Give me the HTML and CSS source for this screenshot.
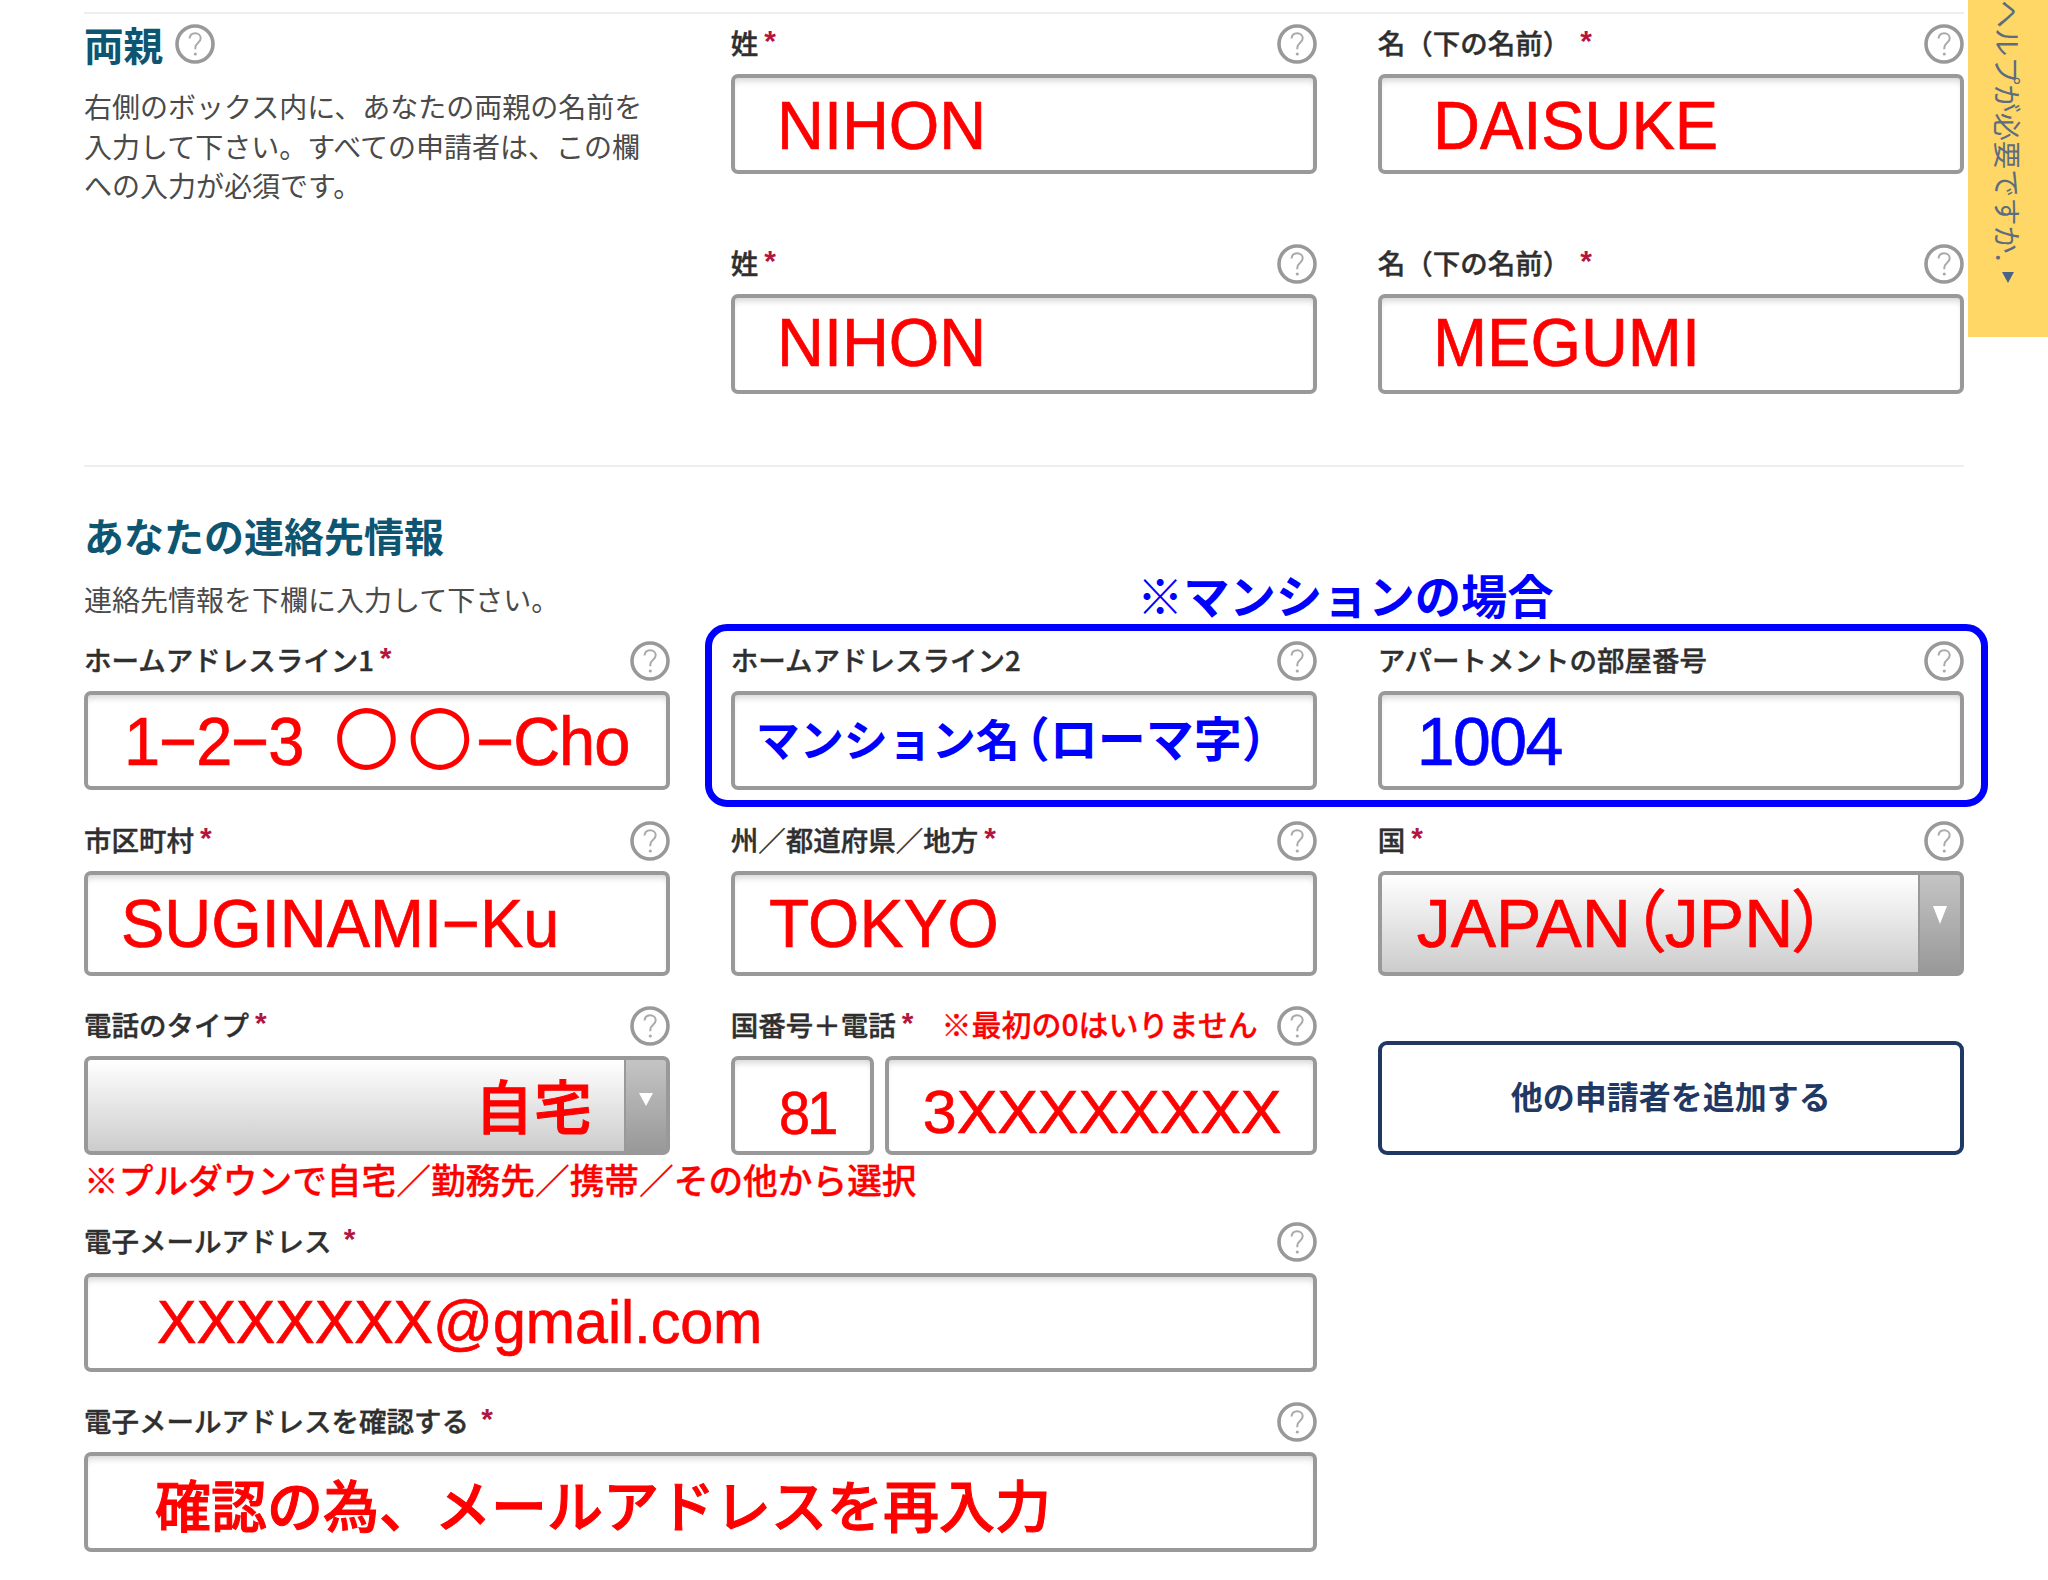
FILE: index.html
```html
<!DOCTYPE html>
<html lang="ja">
<head>
<meta charset="utf-8">
<title>両親 / 連絡先情報</title>
<link rel="stylesheet" href="styles.css">
</head>
<body>
<svg class="defs" width="0" height="0" aria-hidden="true">
  <symbol id="q" viewBox="0 0 40 40" preserveAspectRatio="none">
    <circle cx="20" cy="20" r="18" fill="#fff" stroke="#999" stroke-width="3.6"/>
    <path d="M14.5 14.5c.4-3.4 2.8-5.2 5.7-5.2 3.1 0 5.5 2 5.5 5 0 2.4-1.3 3.6-3 5-1.6 1.3-2.4 2.4-2.4 4.6v1.4" fill="none" stroke="#aaa" stroke-width="2"/>
    <circle cx="20.3" cy="30" r="1.6" fill="#aaa"/>
  </symbol>
</svg>
<main class="page">
  <hr class="rule rule-top">
  <section class="grid parents">
    <div class="intro">
      <h2 class="title"><span>両親</span><svg class="q"><use href="#q"/></svg></h2>
      <p class="desc">右側のボックス内に、あなたの両親の名前を<br>入力して下さい。すべての申請者は、この欄<br>への入力が必須です。</p>
    </div>
    <div class="field">
      <div class="label"><span>姓<i class="ast">*</i></span><svg class="q"><use href="#q"/></svg></div>
      <div class="box h100 val first pad-nihon"><span class="sq">NIHON</span></div>
    </div>
    <div class="field">
      <div class="label"><span>名（下の名前）<i class="ast ast-wide">*</i></span><svg class="q"><use href="#q"/></svg></div>
      <div class="box h100 val first pad-given"><span class="sq">DAISUKE</span></div>
    </div>
    <div class="field">
      <div class="label"><span>姓<i class="ast">*</i></span><svg class="q"><use href="#q"/></svg></div>
      <div class="box h100 val second pad-nihon"><span class="sq">NIHON</span></div>
    </div>
    <div class="field">
      <div class="label"><span>名（下の名前）<i class="ast ast-wide">*</i></span><svg class="q"><use href="#q"/></svg></div>
      <div class="box h100 val second pad-given"><span class="sq">MEGUMI</span></div>
    </div>
  </section>

  <hr class="rule rule-mid">
  <h2 class="title title-contact">あなたの連絡先情報</h2>
  <p class="desc desc-contact">連絡先情報を下欄に入力して下さい。</p>

  <section class="grid row-c">
    <div class="field">
      <div class="label"><span>ホームアドレスライン1<i class="ast">*</i></span><svg class="q"><use href="#q"/></svg></div>
      <div class="box h99 val pad-addr addr"><span class="sq">1−2−3&nbsp;<span class="maru">〇〇</span>−Cho</span></div>
    </div>
    <div class="field">
      <div class="label"><span>ホームアドレスライン2</span><svg class="q"><use href="#q"/></svg></div>
      <div class="box h99 val-blue pad-mansion"><span>マンション名<span class="kana">（ローマ字）</span></span></div>
    </div>
    <div class="field">
      <div class="label"><span>アパートメントの部屋番号</span><svg class="q"><use href="#q"/></svg></div>
      <div class="box h99 val blue pad-room">1004</div>
    </div>
  </section>

  <section class="grid row-d">
    <div class="field">
      <div class="label"><span>市区町村<i class="ast">*</i></span><svg class="q"><use href="#q"/></svg></div>
      <div class="box h105 val lift pad-city"><span class="sq">SUGINAMI−Ku</span></div>
    </div>
    <div class="field">
      <div class="label"><span>州／都道府県／地方<i class="ast">*</i></span><svg class="q"><use href="#q"/></svg></div>
      <div class="box h105 val lift pad-pref"><span class="sq-pref">TOKYO</span></div>
    </div>
    <div class="field">
      <div class="label"><span>国<i class="ast">*</i></span><svg class="q"><use href="#q"/></svg></div>
      <div class="box h105 select">
        <div class="select-value val lift pad-country country">JAPAN（JPN）</div>
        <div class="select-arrow arrow-tall"><b class="tri tri-tall"></b></div>
      </div>
    </div>
  </section>

  <section class="grid row-e">
    <div class="field">
      <div class="label"><span>電話のタイプ<i class="ast">*</i></span><svg class="q"><use href="#q"/></svg></div>
      <div class="box h99 select">
        <div class="select-value val-cjk pad-phone-type">自宅</div>
        <div class="select-arrow"><b class="tri"></b></div>
      </div>
    </div>
    <div class="field">
      <div class="label">
        <span>国番号＋電話<i class="ast">*</i><em class="hint">※最初の0はいりません</em></span>
        <svg class="q"><use href="#q"/></svg>
      </div>
      <div class="phone">
        <div class="box h99 val code pad-code"><span class="sq-code">81</span></div>
        <div class="box h99 val number pad-number">3XXXXXXXX</div>
      </div>
    </div>
    <button class="add" type="button">他の申請者を追加する</button>
  </section>

  <p class="note">※プルダウンで自宅／勤務先／携帯／その他から選択</p>

  <section class="grid row-f">
    <div class="field span2">
      <div class="label gap-11"><span>電子メールアドレス <i class="ast">*</i></span><svg class="q"><use href="#q"/></svg></div>
      <div class="box h99 val pad-mail mail"><span class="sq-mail">XXXXXXX@gmail.com</span></div>
    </div>
  </section>

  <section class="grid row-g">
    <div class="field span2">
      <div class="label"><span>電子メールアドレスを確認する <i class="ast">*</i></span><svg class="q"><use href="#q"/></svg></div>
      <div class="box h100 val-cjk pad-confirm">確認の為、メールアドレスを再入力</div>
    </div>
  </section>
</main>

<div class="frame"></div>
<div class="frame-note">※マンションの場合</div>
<aside class="help"><span class="help-text">ヘルプが必要ですか.</span><b class="help-tri"></b></aside>
</body>
</html>
```
FILE: styles.css
```css
* { box-sizing: border-box; }
html, body { margin: 0; padding: 0; background: #fff; }
body {
  width: 2048px;
  height: 1580px;
  overflow: hidden;
  position: relative;
  font-family: "Noto Sans CJK JP", "Liberation Sans", sans-serif;
  color: #333;
}
.defs { position: absolute; }
.page { width: 1964px; padding-left: 84px; }
.rule { border: 0; height: 2px; background: #eee; margin: 0; }
.rule-top { margin-top: 12px; }
.rule-mid { margin-top: 71px; }

.grid {
  display: grid;
  grid-template-columns: repeat(3, 1fr);
  column-gap: 60.5px;
}
.parents { margin-top: 10px; row-gap: 70px; }
.intro { grid-row: span 2; }
.row-c { margin-top: 22px; }
.row-d { margin-top: 31px; }
.row-e { margin-top: 30px; }
.row-f { margin-top: 23px; }
.row-g { margin-top: 30px; }
.span2 { grid-column: span 2; }

.title {
  display: flex;
  align-items: center;
  gap: 12px;
  margin: 0;
  height: 40px;
  font-size: 39.5px;
  line-height: 40px;
  font-weight: 700;
  color: #0d5571;
}
.title-contact { margin-top: 48px; font-size: 40px; }
.desc {
  margin: 23px 0 0;
  font-size: 28px;
  line-height: 39.5px;
  font-weight: 400;
  color: #4a4a4a;
}
.desc-contact { height: 40px; line-height: 40px; margin-top: 24px; }

.label {
  display: flex;
  justify-content: space-between;
  align-items: center;
  height: 40px;
  margin-bottom: 10px;
  font-size: 27.5px;
  line-height: 38px;
  font-weight: 500;
  color: #2f2f2f;
  -webkit-text-stroke: .4px #2f2f2f;
}
.label > span { padding-bottom: 5px; }
.gap-11 { margin-bottom: 11px; }
.ast {
  font-family: "Liberation Sans", sans-serif;
  font-style: normal;
  font-weight: 700;
  color: #b3153f;
  -webkit-text-stroke: 0;
  margin-left: 6px;
  font-size: 30px;
  line-height: 0;
  vertical-align: 3px;
}
.ast-wide { margin-left: 10px; }
.q { width: 40px; height: 40px; flex: none; display: block; }

.box {
  display: flex;
  align-items: center;
  border: 4px solid #999;
  border-radius: 7px;
  background: #fff;
  box-shadow: inset 0 6px 6px -3px rgba(0, 0, 0, .16);
  overflow: hidden;
  white-space: nowrap;
}
.h99 { height: 99px; }
.h100 { height: 100px; }
.h105 { height: 105px; }

.val {
  font-family: "Liberation Sans", "Noto Sans CJK JP", sans-serif;
  font-size: 68px;
  line-height: 1;
  color: #f00;
  -webkit-text-stroke: .7px #f00;
}
.sq, .sq-code, .sq-mail, .sq-pref {
  display: inline-block;
  transform-origin: 0 50%;
}
.sq { transform: scaleX(.955); }
.sq-pref { transform: scaleX(.97); }
.sq-code { transform: scaleX(.9); letter-spacing: -3px; }
.sq-mail { transform: scaleX(.969); }
.first { padding-top: 2px; }
.second { padding-bottom: 4px; }
.lift { padding-bottom: 2px; }
.blue { color: #00f; -webkit-text-stroke-color: #00f; letter-spacing: -1.5px; }
.val-blue {
  font-size: 44px;
  font-weight: 700;
  color: #00f;
  line-height: 1;
  padding-bottom: 10px;
}
.kana { font-size: 48px; margin-left: -18px; }
.val-cjk {
  font-size: 56px;
  font-weight: 500;
  color: #f00;
  line-height: 1;
  -webkit-text-stroke: 1px #f00;
  padding-top: 2px;
}
.addr { letter-spacing: -1px; }
.maru { letter-spacing: 9px; margin-left: 14px; margin-right: -5px; -webkit-text-stroke: 0; }
.country { font-feature-settings: "palt"; }
.mail { font-size: 61px; }

.pad-nihon { padding-left: 42px; }
.pad-given { padding-left: 51px; }
.pad-addr { padding-left: 36px; }
.pad-mansion { padding-left: 21px; }
.pad-room { padding-left: 35px; }
.pad-city { padding-left: 33px; }
.pad-pref { padding-left: 34px; }
.pad-country { padding-left: 35px; }
.pad-phone-type { padding-left: 387px; font-size: 58px; letter-spacing: 1px; padding-top: 0; padding-bottom: 4px; }
.pad-code { padding-left: 44px; }
.pad-number { padding-left: 34px; }
.pad-mail { padding-left: 69px; }
.pad-confirm { padding-left: 67px; }

.select {
  padding: 0;
  box-shadow: none;
  align-items: stretch;
  background: #999;
}
.select-value {
  flex: 1;
  display: flex;
  align-items: center;
  background: linear-gradient(#fff, #ccc);
}
.select-arrow {
  width: 42px;
  flex: none;
  border-left: 2px solid #999;
  background: linear-gradient(#c4c4c4, #999);
  display: flex;
  justify-content: center;
  padding-top: 33px;
}
.arrow-tall { padding-top: 31px; }
.tri {
  width: 0;
  height: 0;
  border-left: 7px solid transparent;
  border-right: 7px solid transparent;
  border-top: 13px solid #fff;
}
.tri-tall { border-top-width: 18px; }

.code { width: 143px; font-size: 62px; padding-top: 14px; }
.number { flex: 1; font-size: 61px; letter-spacing: -.1px; padding-top: 14px; }
.phone { display: flex; gap: 11px; }
.hint {
  font-style: normal;
  font-size: 30px;
  color: #f00;
  -webkit-text-stroke: .3px #f00;
  margin-left: 28px;
}

.add {
  align-self: end;
  height: 114px;
  border: 4px solid #1f3864;
  border-radius: 9px;
  background: #fff;
  color: #1f3864;
  font-family: inherit;
  font-size: 32px;
  font-weight: 700;
  padding: 0 0 6px;
}
.note {
  margin: 4px 0 0;
  height: 40px;
  font-size: 34.7px;
  line-height: 40px;
  font-weight: 500;
  color: #f00;
  -webkit-text-stroke: .3px #f00;
  white-space: nowrap;
}

.frame {
  position: absolute;
  left: 705px;
  top: 624px;
  width: 1283px;
  height: 183px;
  border: 7px solid #00f;
  border-radius: 22px;
}
.frame-note {
  position: absolute;
  left: 1137px;
  top: 564px;
  font-size: 46.3px;
  line-height: 60px;
  font-weight: 700;
  color: #00f;
}
.help {
  position: absolute;
  right: 0;
  top: 0;
  width: 80px;
  height: 337px;
  background: #ffd766;
  display: flex;
  flex-direction: column;
  align-items: center;
  overflow: hidden;
}
.help-text {
  writing-mode: vertical-rl;
  text-orientation: sideways;
  font-size: 28px;
  letter-spacing: .2px;
  line-height: 40px;
  color: #5d6c80;
  white-space: nowrap;
}
.help-tri {
  margin-top: 10px;
  width: 0;
  height: 0;
  border-left: 6px solid transparent;
  border-right: 6px solid transparent;
  border-top: 11px solid #4a6288;
}
```
